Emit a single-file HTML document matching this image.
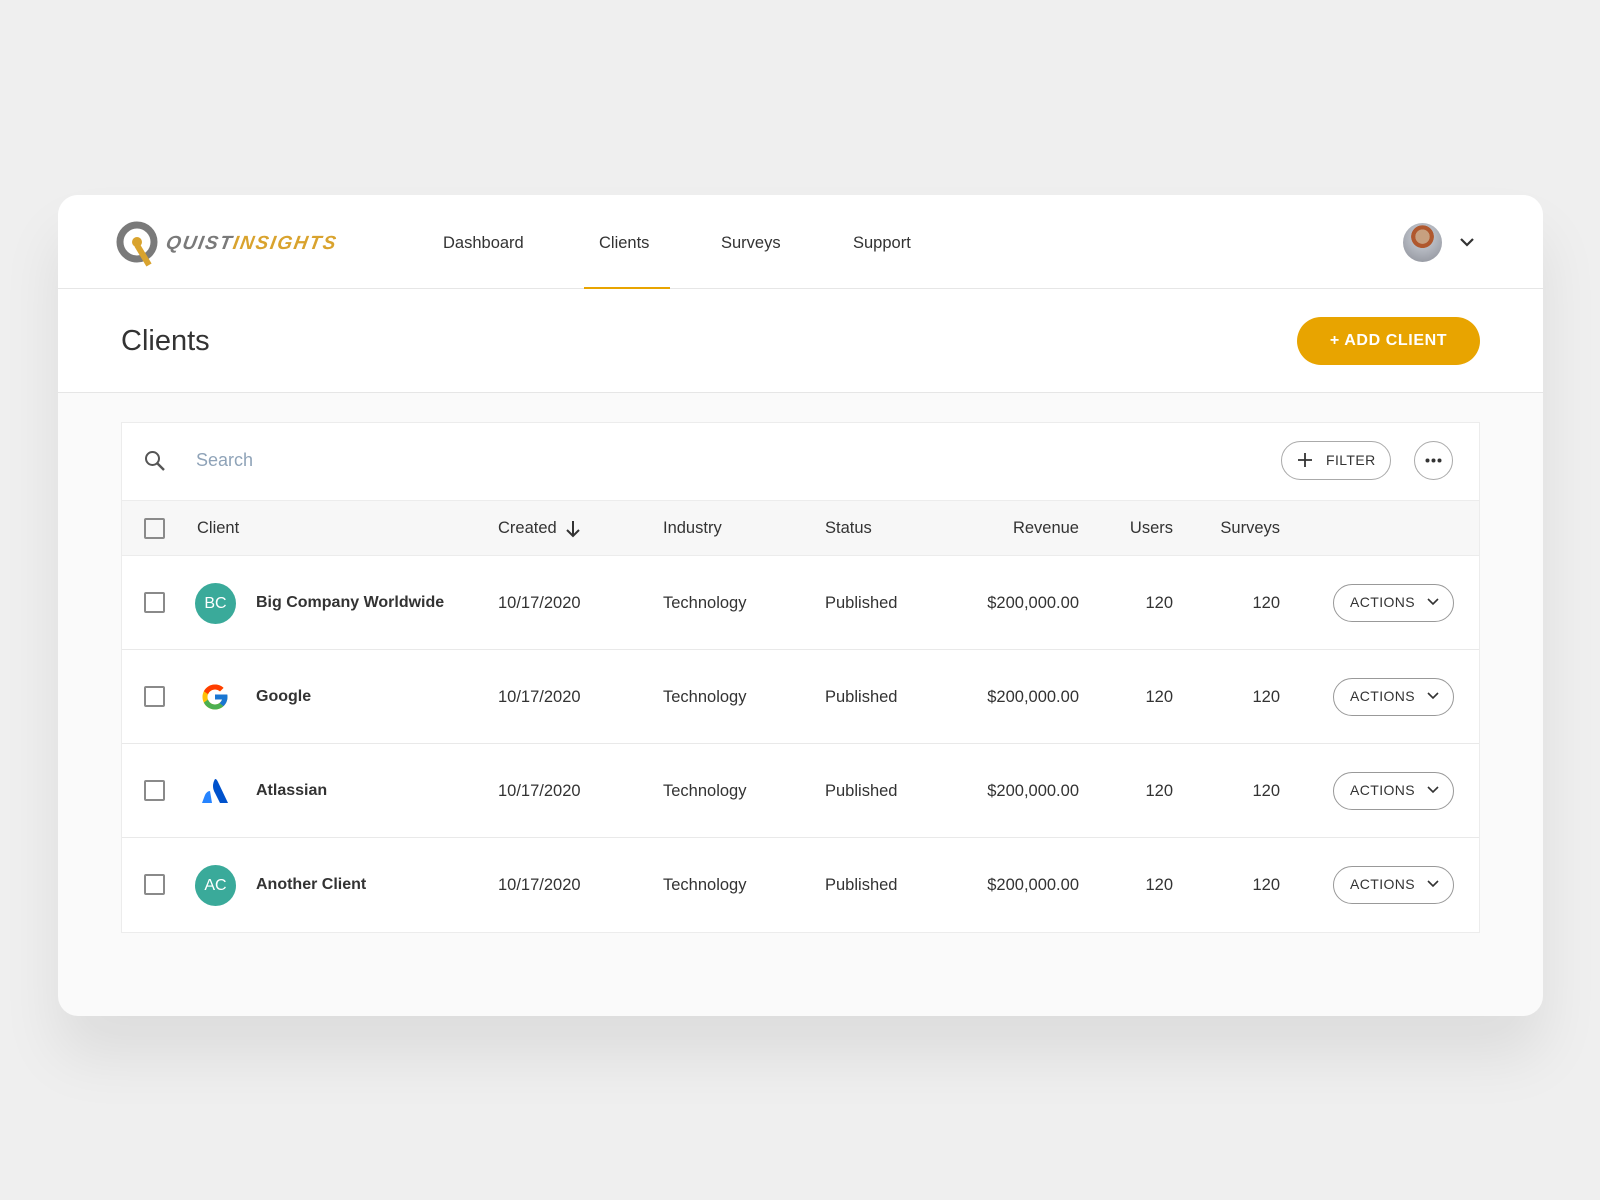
<!DOCTYPE html>
<html><head><meta charset="utf-8"><style>
*{box-sizing:border-box;margin:0;padding:0}
body{width:1600px;height:1200px;background:#efefef;font-family:"Liberation Sans",sans-serif;color:#333;position:relative;overflow:hidden}
.card{position:absolute;left:58px;top:195px;width:1485px;height:821px;background:#fafafa;border-radius:20px;overflow:hidden;box-shadow:0 40px 60px rgba(0,0,0,0.08)}
.hdr{position:absolute;left:0;top:0;width:100%;height:94px;background:#fff;border-bottom:1px solid #e6e6e6}
.nav{position:absolute;top:39px;font-size:16.5px;color:#333}
.ul{position:absolute;left:526px;top:92px;width:86px;height:2px;background:#e8a400}
.sub{position:absolute;left:0;top:94px;width:100%;height:104px;background:#fff;border-bottom:1px solid #e6e6e6}
.title{position:absolute;left:63px;top:36px;font-size:29px;color:#333}
.add{position:absolute;left:1239px;top:28px;width:183px;height:48px;border-radius:24px;background:#e8a400;color:#fff;font-weight:bold;font-size:16px;letter-spacing:.6px;text-align:center;line-height:48px}
.tbl{position:absolute;left:63px;top:227px;width:1359px;height:511px;background:#fff;border:1px solid #ececec}
.cb{position:absolute;left:22px;width:21px;height:21px;border:2px solid #8a8a8a;border-radius:2px}
.th{position:absolute;top:77px;left:0;width:100%;height:56px;background:#f7f7f7;border-top:1px solid #ececec;border-bottom:1px solid #ececec}
.th span{position:absolute;top:18px;font-size:16.5px;color:#333}
.row{position:absolute;left:0;width:100%;height:94px;border-bottom:1px solid #e9e9e9;font-size:16.5px}
.row .t{position:absolute;top:38px}
.row .n{font-weight:bold;font-size:16px;left:134px}
.av{position:absolute;left:73px;top:27px;width:41px;height:41px;border-radius:50%;background:#3aaa9a;color:#fff;font-size:16px;text-align:center;line-height:41px}
.act{position:absolute;left:1211px;top:28px;width:121px;height:38px;border:1.5px solid #999;border-radius:19px;font-size:14px;letter-spacing:.4px;color:#333;line-height:35px;padding-left:16px}
.act svg{position:absolute;right:14px;top:13px}
</style></head><body>
<div class="card">
 <div class="hdr">
  <svg style="position:absolute;left:58px;top:26px" width="48" height="48" viewBox="0 0 48 48">
   <circle cx="21" cy="21" r="17" fill="none" stroke="#7a7a7a" stroke-width="7"/>
   <circle cx="21" cy="21" r="5" fill="#d9a32e"/>
   <path d="M21 24 L33 44" stroke="#d9a32e" stroke-width="6"/>
  </svg>
  <div style="position:absolute;left:108px;top:38px;font-size:19px;font-weight:bold;font-style:italic;letter-spacing:1.8px;transform:skewX(-10deg)"><span style="color:#7a7a7a">QUIST</span><span style="color:#d9a32e">INSIGHTS</span></div>
  <div class="nav" style="left:385px">Dashboard</div>
  <div class="nav" style="left:541px">Clients</div>
  <div class="nav" style="left:663px">Surveys</div>
  <div class="nav" style="left:795px">Support</div>
  <div class="ul"></div>
  <div style="position:absolute;left:1345px;top:28px;width:39px;height:39px;border-radius:50%;background:radial-gradient(circle at 50% 35%,#c7a080 0 22%,#b0582e 23% 35%,#b8bcc4 36%,#8a8d96)"></div>
  <svg style="position:absolute;left:1401px;top:41px" width="16" height="12" viewBox="0 0 16 12"><path d="M2 3 L8 9 L14 3" fill="none" stroke="#333" stroke-width="2.2"/></svg>
 </div>
 <div class="sub"><div class="title">Clients</div><div class="add">+ ADD CLIENT</div></div>
 <div class="tbl">
  <svg style="position:absolute;left:22px;top:27px" width="22" height="22" viewBox="0 0 22 22"><circle cx="8.5" cy="8.5" r="6.5" fill="none" stroke="#555" stroke-width="2"/><path d="M13.5 13.5 L20 20" stroke="#555" stroke-width="2.4"/></svg>
  <div style="position:absolute;left:74px;top:27px;font-size:18px;color:#8fa3b8">Search</div>
  <div style="position:absolute;left:1159px;top:18px;width:110px;height:39px;border:1.5px solid #aaa;border-radius:20px;font-size:14px;letter-spacing:.4px;line-height:36px;padding-left:44px">FILTER
   <svg style="position:absolute;left:16px;top:11px" width="14" height="14" viewBox="0 0 14 14"><path d="M7 0V14M0 7H14" stroke="#333" stroke-width="1.8"/></svg></div>
  <div style="position:absolute;left:1292px;top:18px;width:39px;height:39px;border:1.5px solid #aaa;border-radius:50%">
   <svg style="position:absolute;left:10px;top:16px" width="17" height="5" viewBox="0 0 17 5"><circle cx="2.5" cy="2.5" r="2" fill="#333"/><circle cx="8.5" cy="2.5" r="2" fill="#333"/><circle cx="14.5" cy="2.5" r="2" fill="#333"/></svg></div>
  <div class="th">
   <div class="cb" style="top:17px"></div>
   <span style="left:75px">Client</span>
   <span style="left:376px">Created</span>
   <svg style="position:absolute;left:443px;top:18px" width="16" height="20" viewBox="0 0 16 20"><path d="M8 2V17M2 11L8 17L14 11" fill="none" stroke="#333" stroke-width="2"/></svg>
   <span style="left:541px">Industry</span>
   <span style="left:703px">Status</span>
   <span style="right:400px">Revenue</span>
   <span style="right:306px">Users</span>
   <span style="right:199px">Surveys</span>
  </div>
  <div class="row" style="top:133px">
   <div class="cb" style="top:36px"></div><div class="av">BC</div>
   <div class="t n">Big Company Worldwide</div>
   <div class="t" style="left:376px">10/17/2020</div><div class="t" style="left:541px">Technology</div><div class="t" style="left:703px">Published</div>
   <div class="t" style="right:400px">$200,000.00</div><div class="t" style="right:306px">120</div><div class="t" style="right:199px">120</div>
   <div class="act">ACTIONS<svg width="12" height="8" viewBox="0 0 12 8"><path d="M1 1L6 6L11 1" fill="none" stroke="#333" stroke-width="1.6"/></svg></div>
  </div>
  <div class="row" style="top:227px">
   <div class="cb" style="top:36px"></div>
   <svg style="position:absolute;left:78px;top:32px" width="30" height="30" viewBox="0 0 48 48"><path fill="#FFC107" d="M43.6 20H24v8h11.3C33.7 32.7 29.2 36 24 36c-6.6 0-12-5.4-12-12s5.4-12 12-12c3.1 0 5.8 1.2 8 3l5.7-5.7C34 6 29.3 4 24 4 13 4 4 13 4 24s9 20 20 20 20-9 20-20c0-1.3-.1-2.7-.4-4z"/><path fill="#FF3D00" d="M6.3 14.7l6.6 4.8C14.7 15.1 19 12 24 12c3.1 0 5.8 1.2 8 3l5.7-5.7C34 6 29.3 4 24 4 16.3 4 9.7 8.3 6.3 14.7z"/><path fill="#4CAF50" d="M24 44c5.2 0 9.9-2 13.4-5.2l-6.2-5.2C29.2 35.1 26.7 36 24 36c-5.2 0-9.6-3.3-11.3-8l-6.5 5C9.5 39.6 16.2 44 24 44z"/><path fill="#1976D2" d="M43.6 20H24v8h11.3c-.8 2.2-2.2 4.2-4.1 5.6l6.2 5.2C37 39.2 44 34 44 24c0-1.3-.1-2.7-.4-4z"/></svg>
   <div class="t n">Google</div>
   <div class="t" style="left:376px">10/17/2020</div><div class="t" style="left:541px">Technology</div><div class="t" style="left:703px">Published</div>
   <div class="t" style="right:400px">$200,000.00</div><div class="t" style="right:306px">120</div><div class="t" style="right:199px">120</div>
   <div class="act">ACTIONS<svg width="12" height="8" viewBox="0 0 12 8"><path d="M1 1L6 6L11 1" fill="none" stroke="#333" stroke-width="1.6"/></svg></div>
  </div>
  <div class="row" style="top:321px">
   <div class="cb" style="top:36px"></div>
   <svg style="position:absolute;left:79px;top:33px" width="28" height="28" viewBox="0 0 28 28"><path d="M9 14 Q6 14 4 18 L1 26 H11 Z" fill="#2684ff"/><path d="M14 2 Q10 9 14 16 L19 26 H27 L17 5 Q15.5 1.5 14 2Z" fill="#0052cc"/></svg>
   <div class="t n">Atlassian</div>
   <div class="t" style="left:376px">10/17/2020</div><div class="t" style="left:541px">Technology</div><div class="t" style="left:703px">Published</div>
   <div class="t" style="right:400px">$200,000.00</div><div class="t" style="right:306px">120</div><div class="t" style="right:199px">120</div>
   <div class="act">ACTIONS<svg width="12" height="8" viewBox="0 0 12 8"><path d="M1 1L6 6L11 1" fill="none" stroke="#333" stroke-width="1.6"/></svg></div>
  </div>
  <div class="row" style="top:415px;border-bottom:none">
   <div class="cb" style="top:36px"></div><div class="av">AC</div>
   <div class="t n">Another Client</div>
   <div class="t" style="left:376px">10/17/2020</div><div class="t" style="left:541px">Technology</div><div class="t" style="left:703px">Published</div>
   <div class="t" style="right:400px">$200,000.00</div><div class="t" style="right:306px">120</div><div class="t" style="right:199px">120</div>
   <div class="act">ACTIONS<svg width="12" height="8" viewBox="0 0 12 8"><path d="M1 1L6 6L11 1" fill="none" stroke="#333" stroke-width="1.6"/></svg></div>
  </div>
 </div>
</div>
</body></html>
